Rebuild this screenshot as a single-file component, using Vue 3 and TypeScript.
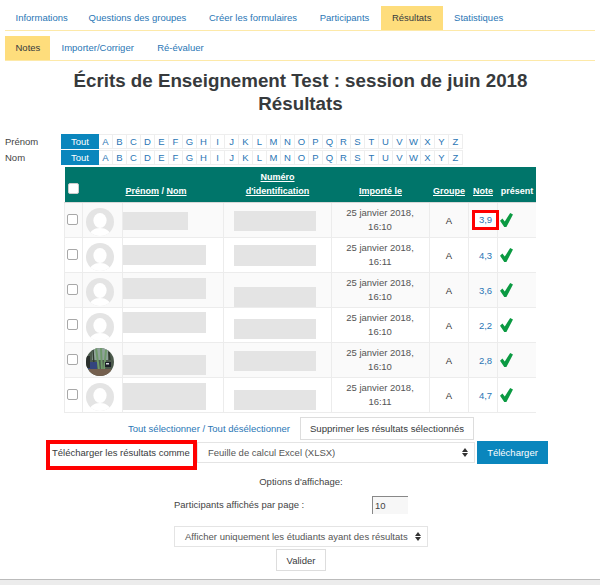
<template>
  <div class="page">
    <nav class="tabs top-tabs">
      <a v-for="tab in mainTabs" :key="tab" class="tab" :class="{ active: tab === 'Résultats' }">{{ tab }}</a>
    </nav>
    <nav class="tabs sub-tabs">
      <a v-for="tab in subTabs" :key="tab" class="tab" :class="{ active: tab === 'Notes' }">{{ tab }}</a>
    </nav>

    <h1 class="title">Écrits de Enseignement Test : session de juin 2018<br />Résultats</h1>

    <div class="initials">
      <div v-for="label in ['Prénom', 'Nom']" :key="label" class="initial-row">
        <span class="initial-label">{{ label }}</span>
        <a class="initial-all">Tout</a>
        <a v-for="letter in letters" :key="letter" class="initial-letter">{{ letter }}</a>
      </div>
    </div>

    <div class="table-wrap">
      <table class="results">
        <colgroup>
          <col class="c-check" />
          <col class="c-photo" />
          <col class="c-name" />
          <col class="c-id" />
          <col class="c-date" />
          <col class="c-group" />
          <col class="c-note" />
          <col class="c-ok" />
        </colgroup>
        <thead>
          <tr>
            <th class="th-check"><span class="head-box"></span></th>
            <th></th>
            <th class="th-name"><u>Prénom</u> / <u>Nom</u></th>
            <th><u>Numéro</u><br /><u>d'identification</u></th>
            <th><u>Importé le</u></th>
            <th><u>Groupe</u></th>
            <th><u>Note</u></th>
            <th>présent</th>
          </tr>
        </thead>
        <tbody>
          <tr v-for="(row, i) in rows" :key="i" :class="{ odd: i % 2 === 0 }">
            <td class="td-check"><span class="box"></span></td>
            <td class="td-photo">
              <svg v-if="!row.photo" class="avatar" viewBox="0 0 28 28">
                <defs>
                  <clipPath :id="'clip' + i"><circle cx="14" cy="14" r="14" /></clipPath>
                </defs>
                <circle cx="14" cy="14" r="14" fill="#e4e4e4" />
                <g :clip-path="`url(#clip${i})`">
                  <ellipse cx="14" cy="12.5" rx="6.6" ry="7.4" fill="#fff" />
                  <path d="M3 28c1-5 5-8 11-8s10 3 11 8z" fill="#fff" />
                </g>
              </svg>
              <svg v-else class="avatar" viewBox="0 0 28 28">
                <defs>
                  <clipPath id="photoClip"><circle cx="14" cy="14" r="14" /></clipPath>
                </defs>
                <g clip-path="url(#photoClip)">
                  <rect width="28" height="28" fill="#4c5a4c" />
                  <rect x="6" y="0" width="16" height="12" fill="#8fa39a" />
                  <path d="M10 0l3 22M15 0l1 24M20 2l-2 20" stroke="#6f9a6a" stroke-width="2" />
                  <path d="M7 2l1 16M23 4l1 8" stroke="#2e3a2e" stroke-width="1.5" />
                  <rect x="2" y="14" width="9" height="7" fill="#34447e" />
                  <rect x="19" y="14" width="6" height="5" fill="#1c2028" />
                  <rect x="20" y="15" width="3" height="1.5" fill="#d8dce0" />
                  <rect x="3" y="21" width="22" height="7" fill="#75604f" />
                  <rect x="0" y="8" width="4" height="12" fill="#2a2f2c" />
                </g>
              </svg>
            </td>
            <td class="td-blank">
              <div class="blur-name" :style="{ width: row.nameW + 'px', height: row.nameH + 'px', marginTop: row.nameTop + 'px' }"></div>
            </td>
            <td class="td-blank">
              <div class="blur-id" :style="{ height: row.idH + 'px', marginTop: row.idTop + 'px' }"></div>
            </td>
            <td class="td-date">25 janvier 2018,<br />{{ row.time }}</td>
            <td class="td-group">A</td>
            <td class="td-note"><a :class="{ boxed: i === 0 }">{{ row.note }}</a></td>
            <td class="td-ok">
              <svg class="check" viewBox="0 0 12 13"><path d="M0 7.2 2.2 5.2l2.2 2.8L9.4 0 12 1.4 5.9 13H3.9z" fill="#0b9a42" /></svg>
            </td>
          </tr>
        </tbody>
      </table>
    </div>

    <div class="select-line">
      <span class="select-links"><a>Tout sélectionner</a> / <a>Tout désélectionner</a></span>
      <button class="btn delete">Supprimer les résultats sélectionnés</button>
    </div>

    <div class="download-line">
      <span class="download-label">Télécharger les résultats comme</span>
      <div class="fake-select format-select">
        <span>Feuille de calcul Excel (XLSX)</span>
        <span class="arrows"></span>
      </div>
      <button class="btn-primary">Télécharger</button>
    </div>

    <div class="options">
      <div class="options-title">Options d'affichage:</div>
      <div class="per-page">
        <span class="per-page-label">Participants affichés par page :</span>
        <span class="num-input">10</span>
      </div>
      <div class="fake-select filter-select">
        <span>Afficher uniquement les étudiants ayant des résultats</span>
        <span class="arrows"></span>
      </div>
      <button class="btn valid">Valider</button>
    </div>

    <div class="bottom-bar"></div>
  </div>
</template>

<script setup lang="ts">
const mainTabs = ['Informations', 'Questions des groupes', 'Créer les formulaires', 'Participants', 'Résultats', 'Statistiques']
const subTabs = ['Notes', 'Importer/Corriger', 'Ré-évaluer']
const letters = 'ABCDEFGHIJKLMNOPQRSTUVWXYZ'.split('')

// the grey blocks hide names, offsets vary per row like in the original
const rows = [
  { time: '16:10', note: '3,9', nameW: 65, nameH: 18, nameTop: 9, idH: 20, idTop: 8, photo: false },
  { time: '16:11', note: '4,3', nameW: 83, nameH: 20, nameTop: 7, idH: 21, idTop: 7, photo: false },
  { time: '16:10', note: '3,6', nameW: 83, nameH: 21, nameTop: 5, idH: 20, idTop: 14, photo: false },
  { time: '16:10', note: '2,2', nameW: 83, nameH: 21, nameTop: 4, idH: 20, idTop: 11, photo: false },
  { time: '16:10', note: '2,8', nameW: 83, nameH: 20, nameTop: 12, idH: 20, idTop: 8, photo: true },
  { time: '16:11', note: '4,7', nameW: 83, nameH: 27, nameTop: 5, idH: 20, idTop: 12, photo: false },
]
</script>

<style>
html, body { margin: 0; background: #fff; overflow: hidden; }
</style>

<style scoped>
.page {
  width: 600px;
  height: 585px;
  font-family: "Liberation Sans", Arial, sans-serif;
  font-size: 9.5px;
  color: #373a3c;
  background: #fff;
  display: flex;
  flex-direction: column;
  overflow: hidden;
}

.tabs {
  display: flex;
  margin: 0 5px;
  border-bottom: 1px solid #fde9a8;
}
.top-tabs { padding-top: 6px; }
.sub-tabs { margin-top: 5px; }

.tab {
  height: 24px;
  line-height: 24px;
  padding: 0 11.3px;
  color: #2a76b5;
}
.tab:first-child { padding: 0 9.5px 0 10.5px; }
.tab.active {
  background: #fedd7c;
  color: #373a3c;
}
.sub-tabs .tab { padding: 0 11.7px; }
.sub-tabs .tab:first-child { padding: 0 9.5px 0 10.5px; }

.title {
  margin: 8px 0 0;
  padding-left: 1px;
  height: 46px;
  text-align: center;
  font-size: 18.75px;
  line-height: 23px;
  font-weight: bold;
  color: #373a3c;
}

.initials {
  margin-top: 19px;
  display: flex;
  flex-direction: column;
  gap: 1px;
}
.initial-row {
  display: flex;
  height: 15px;
  padding-left: 5px;
  line-height: 15px;
}
.initial-label { width: 56px; color: #444; }
.initial-all {
  width: 38px;
  background: #0a86bd;
  color: #fff;
  text-align: center;
}
.initial-letter {
  width: 14px;
  box-sizing: border-box;
  border: 1px solid #eee;
  border-left: 0;
  color: #2a76b5;
  text-align: center;
  line-height: 13px;
}

.table-wrap {
  margin: 2px 0 0 64px;
  width: 472px;
  height: 246px;
  overflow: hidden;
}
.results {
  width: 472px;
  table-layout: fixed;
  border-collapse: collapse;
}
.c-check { width: 18px; }
.c-photo { width: 40px; }
.c-name { width: 101px; }
.c-id { width: 108px; }
.c-date { width: 98px; }
.c-group { width: 39px; }
.c-note { width: 29px; }
.c-ok { width: 39px; }

.results th {
  background: #00756a;
  color: #fff;
  height: 31px;
  padding: 0 0 4px;
  font-size: 9px;
  line-height: 14px;
  font-weight: bold;
  text-align: center;
  vertical-align: bottom;
  white-space: nowrap;
  border-bottom: 1px solid #d8d8d8;
}
.results th.th-name { text-align: left; padding-left: 3px; }
.results th.th-check { height: 27px; padding-bottom: 8px; }
.head-box {
  display: block;
  width: 9px;
  height: 9px;
  margin-left: 3.5px;
  background: #fff;
  border: 1px solid #ccc;
  border-radius: 2px;
}
.results td {
  height: 34px;
  padding: 0;
  border: 1px solid #ececec;
  text-align: center;
  vertical-align: middle;
}
.results tr.odd td { background: #fafafa; }
.box {
  display: block;
  width: 9px;
  height: 9px;
  margin: -2px 0 0 2px;
  border: 1px solid #a8a8a8;
  border-radius: 2px;
  background: #fff;
}
.avatar {
  display: block;
  width: 28px;
  height: 28px;
  margin: 3px 0 0 3px;
}
.results td.td-blank { vertical-align: top; }
.blur-name { background: #e4e4e4; }
.blur-id { background: #e4e4e4; width: 82px; margin-left: 10px; }
.td-date { line-height: 14.5px; color: #555; padding-right: 1px !important; }
.td-group { color: #333; }
.td-note a {
  display: block;
  width: 21px;
  margin-left: 6px;
  color: #2a76b5;
}
.td-note a.boxed {
  position: relative;
  box-sizing: border-box;
  width: 27px;
  height: 20px;
  margin-left: 3px;
  line-height: 13px;
  background: #fff;
  border: 3px solid #f00;
}
.results td.td-ok { text-align: left; }
.check { display: block; width: 13px; height: 14px; margin: 0 0 0 2px; }

.select-line {
  margin-top: 3px;
  height: 24px;
  display: flex;
  align-items: center;
  padding-left: 128px;
  gap: 9px;
}
.select-links { width: 163px; white-space: nowrap; color: #2a76b5; }
.btn {
  height: 23px;
  box-sizing: border-box;
  padding: 0;
  background: #fff;
  border: 1px solid #ddd;
  font: inherit;
  color: #373a3c;
}
.delete { width: 174px; font-size: 9.6px; }

.download-line {
  display: flex;
  align-items: flex-start;
  height: 24px;
  padding-left: 46px;
}
.download-label {
  box-sizing: border-box;
  width: 151px;
  height: 30px;
  line-height: 17px;
  padding-left: 2px;
  border: 4px solid #f00;
  white-space: nowrap;
  color: #373a3c;
}
.fake-select {
  box-sizing: border-box;
  height: 21px;
  display: flex;
  align-items: center;
  justify-content: space-between;
  border: 1px solid #e4e4e4;
  background: #fff;
  color: #555;
  padding: 0 9px 0 10px;
  white-space: nowrap;
}
.format-select { width: 278px; margin-top: 2px; }
.arrows {
  width: 0;
  height: 9px;
  position: relative;
}
.arrows::before, .arrows::after {
  content: "";
  position: absolute;
  left: -3px;
  border-left: 3px solid transparent;
  border-right: 3px solid transparent;
}
.arrows::before { top: 0; border-bottom: 4px solid #333; }
.arrows::after { bottom: 0; border-top: 4px solid #333; }
.btn-primary {
  margin: 1px 0 0 2px;
  width: 71px;
  height: 23px;
  background: #0a86bd;
  color: #fff;
  border: 0;
  font: inherit;
}

.options {
  margin-top: 12px;
  padding-left: 2px;
  display: flex;
  flex-direction: column;
  align-items: center;
}
.options-title { line-height: 11px; color: #444; }
.per-page {
  margin: 6px 20px 0 0;
  width: 234px;
  height: 24px;
  display: flex;
  justify-content: space-between;
  align-items: center;
  color: #444;
}
.per-page-label { margin-bottom: 2px; }
.num-input {
  box-sizing: border-box;
  width: 36px;
  height: 18px;
  line-height: 18px;
  padding-left: 2px;
  background: #f7f7f7;
  border-top: 1px solid #888;
  border-left: 1px solid #888;
}
.filter-select {
  margin-top: 9px;
  width: 254px;
}
.valid {
  margin-top: 2px;
  width: 50px;
  height: 22px;
}
.bottom-bar {
  margin-top: auto;
  height: 5px;
  background: #ececec;
  border-top: 1px solid #bbb;
}
</style>
